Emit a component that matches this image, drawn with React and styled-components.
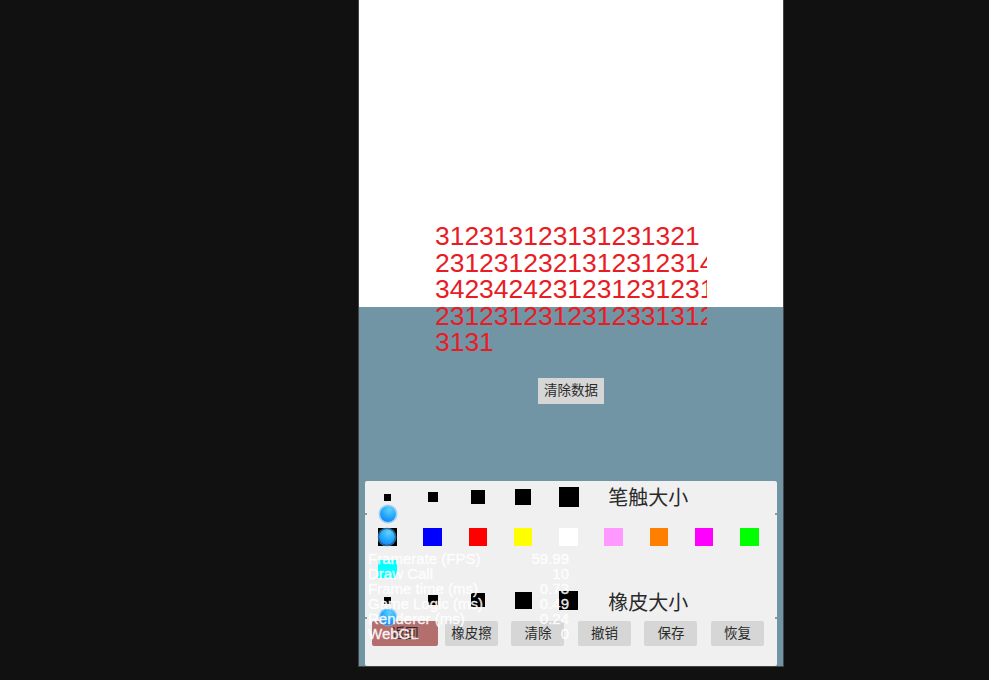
import React from 'react'
import styled, { createGlobalStyle } from 'styled-components'

const GlobalStyle = createGlobalStyle`
  html, body {
    margin: 0;
    padding: 0;
    background: #111111;
  }
  body {
    font-family: "Liberation Sans", "Noto Sans CJK SC", sans-serif;
  }
`

const Page = styled.div`
  width: 989px;
  height: 680px;
  display: flex;
  padding-left: 359px;
  box-sizing: border-box;
  background: #111111;
  overflow: hidden;
`
const Stage = styled.div`
  position: relative;
  width: 424px;
  height: 666px;
  display: flex;
  flex-direction: column;
  box-shadow: 0 0 0 1px #454545;
`
const WhiteArea = styled.div`
  height: 307px;
  background: #ffffff;
`
const TealArea = styled.div`
  flex: 1;
  display: flex;
  flex-direction: column;
  align-items: center;
  background: #7195a4;
`
const ClearButton = styled.button`
  width: 66px;
  height: 26px;
  margin: 71px 0 0 0;
  padding: 0;
  border: none;
  background: #d6d6d6;
  color: #2a2a2a;
  font-family: inherit;
  font-size: 13.5px;
  line-height: 26px;
`
const Panel = styled.div`
  position: relative;
  width: 412px;
  height: 185px;
  margin-top: auto;
  background: #f0f0f0;
  border-radius: 2px;
`
const RedText = styled.div`
  position: absolute;
  left: 76px;
  top: 223px;
  width: 272px;
  overflow: hidden;
  color: #e81c24;
  font-size: 26.45px;
  line-height: 26.6px;
`
const RedLine = styled.div`
  white-space: nowrap;
`
const SizeRow = styled.div`
  display: grid;
  grid-template-columns: repeat(5, 45.25px) auto;
  align-items: center;
  height: 32px;
  margin-top: ${p => p.$top || 0}px;
`
const Cell = styled.div`
  display: flex;
  justify-content: center;
  align-items: center;
`
const Dot = styled.div`
  width: ${p => p.$size}px;
  height: ${p => p.$size}px;
  background: #000000;
`
const SizeLabel = styled.div`
  margin: ${p => p.$shift}px 0 0 17px;
  color: #2a2a2a;
  font-size: 20px;
  line-height: 28px;
`
const Track = styled.div`
  position: relative;
  height: 0;
  &::before, &::after {
    content: '';
    position: absolute;
    top: ${p => p.$tick}px;
    width: 2px;
    height: 2px;
    background: #7f9dab;
  }
  &::before { left: 0; }
  &::after { right: 0; }
`
const Ball = styled.div`
  position: absolute;
  left: ${p => p.$left}px;
  top: ${p => p.$top}px;
  width: 16px;
  height: 16px;
  border-radius: 50%;
  background: radial-gradient(circle at 60% 22%, #62d0ff 0%, #28acfd 45%, #0a72f5 100%);
  box-shadow: 0 0 0 1.5px rgba(90, 190, 250, 0.55);
`
const ColorGrid = styled.div`
  display: grid;
  grid-template-columns: repeat(9, 45.25px);
  grid-auto-rows: 18px;
  row-gap: 14px;
  margin: 15px 0 0 -0.375px;
`
const Swatch = styled.div`
  position: relative;
  width: 18.5px;
  height: 18px;
  background: ${p => p.$color};
`
const ButtonRow = styled.div`
  display: flex;
  gap: 13.5px;
  margin: 5.5px 0 0 7px;
`
const ActionButton = styled.button`
  width: ${p => (p.$primary ? 66 : 53)}px;
  height: 25px;
  margin: 0;
  padding: 0;
  border: none;
  border-radius: 2px;
  background: ${p => (p.$primary ? '#b36e6e' : '#d6d6d6')};
  color: #2a2a2a;
  font-family: inherit;
  font-size: 13.5px;
  line-height: 25px;
  &:first-child { margin-right: -6.6px; }
`
const Stats = styled.div`
  position: absolute;
  left: 9px;
  top: 551px;
  width: 201px;
  color: rgba(255, 255, 255, 0.88);
  font-size: 15px;
  line-height: 15px;
  -webkit-text-stroke: 0.4px rgba(255, 255, 255, 0.88);
  pointer-events: none;
`
const StatRow = styled.div`
  display: flex;
  justify-content: space-between;
  white-space: nowrap;
`

const lines = ['312313123131231321', '2312312321312312314', '3423424231231231231', '2312312312312331312', '3131']
const brushSizes = [7, 10, 14, 16, 20]
const eraserSizes = [7, 10, 14, 17, 19]
const colors = ['#000000', '#0000ff', '#ff0000', '#ffff00', '#ffffff', '#ff99ff', '#ff8000', '#ff00ff', '#00ff00', '#00ffff']
const actions = ['返回', '橡皮擦', '清除', '撤销', '保存', '恢复']
const stats = [
  ['Framerate (FPS)', '59.99'],
  ['Draw Call', '10'],
  ['Frame time (ms)', '0.73'],
  ['Game Logic (ms)', '0.49'],
  ['Renderer (ms)', '0.24'],
  ['WebGL', '0'],
]

const SizePicker = ({ sizes, label, top, shift }) => (
  <SizeRow $top={top}>
    {sizes.map((size, i) => (
      <Cell key={i}><Dot $size={size} /></Cell>
    ))}
    <SizeLabel $shift={shift}>{label}</SizeLabel>
  </SizeRow>
)

const App = () => {
  return (
    <Page>
      <GlobalStyle />
      <Stage>
        <WhiteArea />
        <TealArea>
          <ClearButton>清除数据</ClearButton>
          <Panel>
            <SizePicker sizes={brushSizes} label="笔触大小" shift={2} />
            <Track $tick={0}>
              <Ball $left={14.5} $top={-7} />
            </Track>
            <ColorGrid>
              {colors.map((color, i) => (
                <Cell key={color}>
                  <Swatch $color={color}>
                    {i === 0 && <Ball $left={1.25} $top={1} />}
                  </Swatch>
                </Cell>
              ))}
            </ColorGrid>
            <SizePicker sizes={eraserSizes} label="橡皮大小" top={5} shift={6} />
            <Track $tick={2}>
              <Ball $left={14.5} $top={-6} />
            </Track>
            <ButtonRow>
              {actions.map((text, i) => (
                <ActionButton key={text} $primary={i === 0}>{text}</ActionButton>
              ))}
            </ButtonRow>
          </Panel>
        </TealArea>
        <RedText>
          {lines.map(line => <RedLine key={line}>{line}</RedLine>)}
        </RedText>
        <Stats>
          {stats.map(([name, value]) => (
            <StatRow key={name}><span>{name}</span><span>{value}</span></StatRow>
          ))}
        </Stats>
      </Stage>
    </Page>
  )
}

export default App
